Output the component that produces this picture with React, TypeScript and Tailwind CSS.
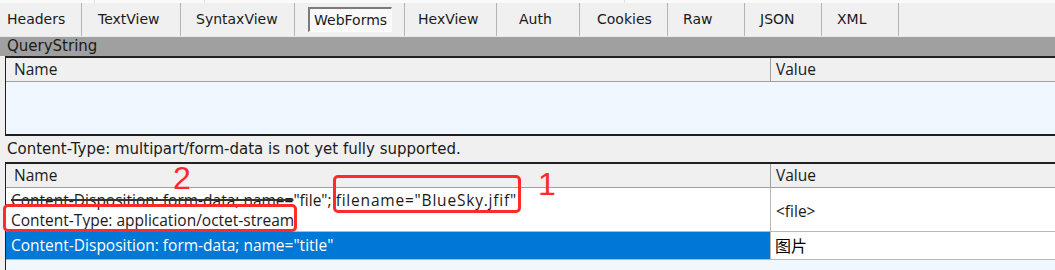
import React from "react";

const tabs = [
  { label: "Headers", w: "w-[82px]", pl: "pl-[7px]" },
  { label: "TextView", w: "w-[99px]", pl: "pl-[16px]" },
  { label: "SyntaxView", w: "w-[114px]", pl: "pl-[15px]" },
  { label: "WebForms", w: "w-[110px]", pl: "pl-[13px]", active: true },
  { label: "HexView", w: "w-[92px]", pl: "pl-[13px]" },
  { label: "Auth", w: "w-[83px]", pl: "pl-[22px]" },
  { label: "Cookies", w: "w-[88px]", pl: "pl-[17px]" },
  { label: "Raw", w: "w-[77px]", pl: "pl-[15px]" },
  { label: "JSON", w: "w-[77px]", pl: "pl-[15px]" },
  { label: "XML", w: "w-[77px]", pl: "pl-[15px]" },
];

const tabFont = "font-['DejaVu_Sans',sans-serif] text-[14px]";
const tahoma = "font-['DejaVu_Sans',sans-serif] text-[15px]";
const segoe = "font-['Open_Sans','Noto_Sans_CJK_SC',sans-serif] text-[15.5px]";

function TabBar() {
  return (
    <div className="h-[33px] bg-[#f0f0f0] flex items-center">
      {tabs.map((t) => (
        <div key={t.label} className={`${t.w} h-full flex items-center border-r border-[#b4b4b4] my-[2px] shrink-0`}>
          {t.active ? (
            <div className="ml-[13px] h-[25px] px-[4px] flex items-center bg-[#f9f9f9] border-t-2 border-l-2 border-[#7a7a7a] border-b border-r border-b-white border-r-white">
              <span className={`${tabFont} text-[#1a1a1a]`}>{t.label}</span>
            </div>
          ) : (
            <span className={`${tabFont} text-[#1a1a1a] ${t.pl}`}>{t.label}</span>
          )}
        </div>
      ))}
    </div>
  );
}

function GridHeader() {
  return (
    <div className="flex h-[24px] bg-[#f0f0f0] border-b border-[#a0a0a0]">
      <div className={`w-[765px] border-r border-[#a0a0a0] pl-[8px] flex items-center ${segoe} text-[#1a1a1a]`}>Name</div>
      <div className={`flex-1 pl-[5px] flex items-center ${segoe} text-[#1a1a1a]`}>Value</div>
    </div>
  );
}

export default function App() {
  return (
    <div className="w-[1055px] h-[270px] overflow-hidden bg-[#f0f0f0] relative">
      <div className="h-[3px] bg-[#fafafa] flex">
        <div className="w-[95px] border-r border-[#e0e0e0]" />
        <div className="w-[110px] border-r border-[#e0e0e0]" />
        <div className="w-[420px] border-r border-[#e0e0e0]" />
      </div>
      <TabBar />
      <div className="h-px bg-[#e8e8e8]" />
      <div className={`h-[19px] bg-[#a0a0a0] pl-[7px] flex items-center ${tahoma} text-[#1a1a1a]`}>QueryString</div>

      <div className="ml-[5px] border-t-2 border-l border-b-2 border-[#202020]">
        <GridHeader />
        <div className="h-[52px] bg-[#f0f7ff]" />
      </div>

      <div className={`h-[26px] pl-[7px] flex items-center ${tahoma} text-[#1a1a1a]`}>
        Content-Type: multipart/form-data is not yet fully supported.
      </div>

      <div className="ml-[5px] border-t-2 border-l border-[#202020] bg-[#f0f7ff] h-[200px]">
        <GridHeader />
        <div className="flex h-[44px] bg-white border-b border-[#b8b8b8]">
          <div className={`w-[765px] border-r border-[#b8b8b8] pl-[5px] flex flex-col justify-center leading-[20px] ${segoe} text-[#1a1a1a]`}>
            <div>
              <span className="line-through decoration-[#333] decoration-[1.5px]">Content-Disposition: form-data; name=</span>
              "file"; <span className="tracking-[0.8px]">filename="BlueSky.jfif"</span>
            </div>
            <div>Content-Type: application/octet-stream</div>
          </div>
          <div className={`flex-1 pl-[5px] flex items-center pt-[4px] ${segoe} text-[#1a1a1a]`}>&lt;file&gt;</div>
        </div>
        <div className="flex h-[28px] bg-white border-b border-[#b8b8b8]">
          <div className={`w-[765px] bg-[#0078d7] border-r border-[#b8b8b8] pl-[5px] flex items-center ${segoe} text-white`}>
            Content-Disposition: form-data; name="title"
          </div>
          <div className={`flex-1 pl-[4px] flex items-center ${segoe} text-[16px] text-black`}>图片</div>
        </div>
      </div>

      {/* red annotations */}
      <div className="absolute left-[333px] top-[175px] w-[188px] h-[38px] border-[3px] border-[#ff2a2a] rounded-[5px]" />
      <div className="absolute left-[3px] top-[204px] w-[294px] h-[28px] border-[3px] border-[#ff2a2a] rounded-[5px]" />
      <div className="absolute left-[538px] top-[168px] font-['Liberation_Sans',sans-serif] font-light text-[32px] leading-none text-[#ff2a2a]">1</div>
      <div className="absolute left-[173px] top-[162px] font-['Liberation_Sans',sans-serif] font-light text-[32px] leading-none text-[#ff2a2a]">2</div>
    </div>
  );
}
